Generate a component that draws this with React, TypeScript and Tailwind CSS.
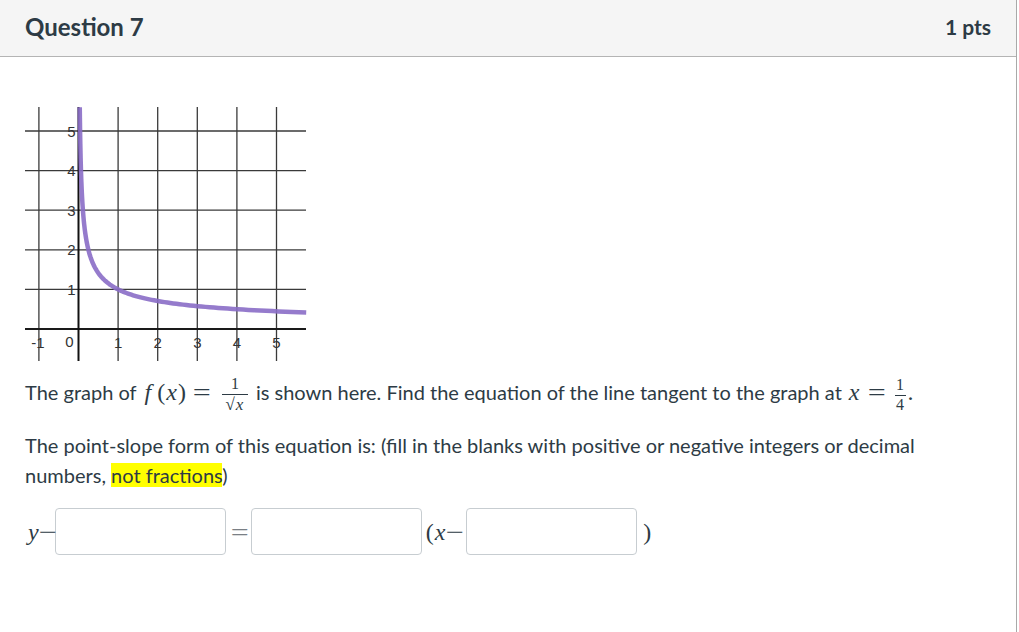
import React from "react";

const X0 = 53.5; // origin x in svg coords (real 78.5 - 25)
const Y0 = 228; // origin y in svg coords (real 330 - 102)
const U = 39.6;

function curvePath() {
  const pts: string[] = [];
  const xStart = 1 / (5.6 * 5.6);
  const xEnd = 5.75;
  const n = 160;
  for (let i = 0; i <= n; i++) {
    const t = i / n;
    const x = xStart * Math.pow(xEnd / xStart, t);
    const X = X0 + U * x;
    const Y = Y0 - U / Math.sqrt(x);
    pts.push(`${i === 0 ? "M" : "L"}${X.toFixed(2)},${Y.toFixed(2)}`);
  }
  return pts.join(" ");
}

function Graph() {
  const xs = [-1, 1, 2, 3, 4, 5];
  const ys = [1, 2, 3, 4, 5];
  return (
    <svg width="283" height="262" viewBox="0 0 283 262" className="block">
      {xs.map((v) => (
        <line
          key={"v" + v}
          x1={X0 + U * v}
          x2={X0 + U * v}
          y1={6}
          y2={260}
          stroke="#3a3a3a"
          strokeWidth={1.3}
        />
      ))}
      {ys.map((v) => (
        <line
          key={"h" + v}
          x1={0}
          x2={281}
          y1={Y0 - U * v}
          y2={Y0 - U * v}
          stroke="#3a3a3a"
          strokeWidth={1.3}
        />
      ))}
      <line x1={0} x2={281} y1={Y0} y2={Y0} stroke="#1a1a1a" strokeWidth={2} />
      <line x1={X0} x2={X0} y1={6} y2={260} stroke="#111" strokeWidth={2} />
      <path d={curvePath()} fill="none" stroke="#8a6dc6" strokeWidth={4.5} strokeOpacity={0.9} strokeLinecap="butt" />
      <g fontFamily="'Liberation Sans', Arial, sans-serif" fontSize="15" fill="#333">
        {ys.map((v) => (
          <text key={"yl" + v} x={X0 - 3} y={Y0 - U * v + 5.5} textAnchor="end">
            {v}
          </text>
        ))}
        <text x={X0 + U * -1 - 1} y={Y0 + 19} textAnchor="middle">-1</text>
        <text x={X0 - 9} y={Y0 + 18} textAnchor="middle">0</text>
        {[1, 2, 3, 4, 5].map((v) => (
          <text key={"xl" + v} x={X0 + U * v} y={Y0 + 19} textAnchor="middle">
            {v}
          </text>
        ))}
      </g>
    </svg>
  );
}

const mathFont = "font-['Liberation_Serif','Times_New_Roman',serif]";

function Frac({
  num,
  den,
  width,
  className = "",
}: {
  num: React.ReactNode;
  den: React.ReactNode;
  width: string;
  className?: string;
}) {
  return (
    <span
      className={`inline-flex flex-col items-center align-middle my-[-10px] leading-none text-[16px] ${mathFont} ${width} ${className}`}
    >
      <span className="pb-[2px]">{num}</span>
      <span className="border-t border-[#2d3b45] pt-[1px] w-full text-center">{den}</span>
    </span>
  );
}

function Eq({ className = "" }: { className?: string }) {
  return (
    <span className={`inline-block w-[18px] text-center ${mathFont} text-[24px] ${className}`}>
      <span className="inline-block scale-x-[1.33]">=</span>
    </span>
  );
}

function Minus({ className = "" }: { className?: string }) {
  return (
    <span className={`inline-block w-[14px] text-center ${mathFont} text-[24px] ${className}`}>
      <span className="inline-block scale-x-[1.35]">−</span>
    </span>
  );
}

function Box() {
  return (
    <span className="inline-block shrink-0 w-[171px] h-[47px] rounded-[4px] border border-[#c7cdd1] bg-white align-middle" />
  );
}

export default function App() {
  return (
    <div className="w-[1017px] h-[632px] bg-white border-r border-[#a9a9a9] font-['Lato','Noto_Sans',sans-serif] text-[#2d3b45]">
      <div className="h-[57px] bg-[#f5f5f5] border-b border-[#b4b4b4] flex items-center justify-between px-[25px] pb-[2px]">
        <div className="text-[24px] font-bold">Question 7</div>
        <div className="text-[21px] font-bold">1 pts</div>
      </div>
      <div className="px-[25px] pt-[44px]">
        <Graph />
        <p className="mt-[14px] text-[20px] leading-[30px]">
          The graph of
          <span className={`${mathFont} italic text-[24px] ml-[8px]`}>f</span>
          <span className={`${mathFont} text-[24px] ml-[6px]`}>(</span>
          <span className={`${mathFont} italic text-[24px] ml-[1px]`}>x</span>
          <span className={`${mathFont} text-[24px] ml-[1px]`}>)</span>
          <Eq className="ml-[7px]" />
          <Frac
            width="w-[26px]"
            className="ml-[11px]"
            num="1"
            den={
              <span className="text-[17px]">
                √<span className="italic border-t border-[#2d3b45] px-[1px]">x</span>
              </span>
            }
          />
          <span className="ml-[8px]">is shown here. Find the equation of the line tangent to the graph at</span>
          <span className={`${mathFont} italic text-[24px] ml-[7px] mr-[1px]`}>x</span>
          <Eq className="ml-[7px]" />
          <Frac width="w-[11px]" className="ml-[9px]" num="1" den="4" />
          <span className={`${mathFont} text-[24px] ml-[2px]`}>.</span>
        </p>
        <p className="mt-[23px] text-[20px] leading-[30px] w-[900px]">
          The point-slope form of this equation is: (fill in the blanks with positive or negative integers or decimal
          numbers, <span className="bg-[#ffff00]">not fractions</span>)
        </p>
        <div className={`mt-[18px] flex items-center text-[24px] ${mathFont}`}>
          <span className="ml-[3px] italic">y</span>
          <Minus className="ml-[2px]" />
          <Box />
          <Eq className="ml-[5px] mr-[2px] text-[#7a7f85]" />
          <Box />
          <span className="ml-[4px]">(</span>
          <span className="italic ml-[1px]">x</span>
          <Minus className="ml-[2px] mr-[5px]" />
          <Box />
          <span className="ml-[6px]">)</span>
        </div>
      </div>
    </div>
  );
}
